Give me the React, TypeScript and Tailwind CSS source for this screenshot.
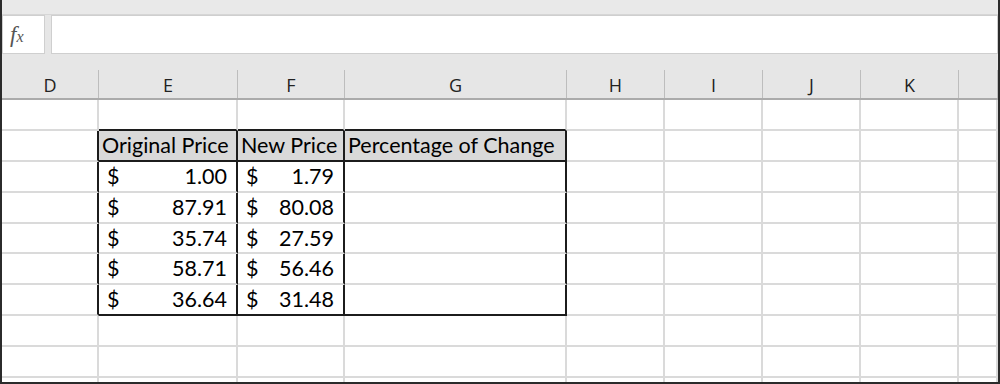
import React from 'react';

const COLS = [
  { name: 'D', w: 97 },
  { name: 'E', w: 139 },
  { name: 'F', w: 107 },
  { name: 'G', w: 222 },
  { name: 'H', w: 98 },
  { name: 'I', w: 98 },
  { name: 'J', w: 98 },
  { name: 'K', w: 98 },
  { name: '', w: 39 },
];

const ROW_H = ['h-[31px]', 'h-[31px]', 'h-[31px]', 'h-[31px]', 'h-[30px]', 'h-[31px]', 'h-[31px]', 'h-[31px]', 'h-[31px]', 'h-[31px]'];

const PRICES: [string, string][] = [
  ['1.00', '1.79'],
  ['87.91', '80.08'],
  ['35.74', '27.59'],
  ['58.71', '56.46'],
  ['36.64', '31.48'],
];

const CELL_FONT = { fontFamily: 'Lato, "Open Sans", sans-serif' };

// table sits in rows 1-6, columns E..G
function cellBorders(r: number, c: number) {
  const inTable = r >= 1 && r <= 6;
  const right = inTable && c >= 0 && c <= 3 ? 'border-r-[#1c1c1c]' : 'border-r-[#dadada]';
  const bottom = (r === 0 || r === 1 || r === 6) && c >= 1 && c <= 3 ? 'border-b-[#1c1c1c]' : 'border-b-[#dadada]';
  return `border-r-2 border-b-2 ${right} ${bottom}`;
}

function Money({ v }: { v: string }) {
  return (
    <div className="flex h-full items-center justify-between pl-[8px] pr-[9px] text-[21.5px] text-black" style={CELL_FONT}>
      <span>$</span>
      <span>{v}</span>
    </div>
  );
}

function CellContent({ r, c }: { r: number; c: number }) {
  if (r === 1 && c >= 1 && c <= 3) {
    const label = ['Original Price', 'New Price', 'Percentage of Change'][c - 1];
    return (
      <div className="flex h-full items-center whitespace-nowrap bg-[#d9d9d9] pl-[3px] text-[21.5px] text-black" style={CELL_FONT}>
        {label}
      </div>
    );
  }
  if (r >= 2 && r <= 6 && (c === 1 || c === 2)) {
    return <Money v={PRICES[r - 2][c - 1]} />;
  }
  return null;
}

export default function App() {
  return (
    <div className="flex h-[384px] w-[1000px] flex-col overflow-hidden border-b-2 border-l-2 border-r-2 border-[#2b2b2b] bg-white">
      {/* formula bar */}
      <div className="h-[70px] shrink-0 bg-[#e6e6e6]">
        <div className="h-[15px] border-b border-[#d6d6d6] bg-[#e9e9e9]" />
        <div className="flex h-[39px] gap-[6px]">
          <div className="flex w-[43px] items-center border border-[#cfcfcf] bg-white pl-[7px]">
            <span className="italic leading-none text-[#555]" style={{ fontFamily: '"Liberation Serif", serif', fontSize: 23 }}>
              f<span className="text-[16px]">x</span>
            </span>
          </div>
          <div className="flex-1 border border-[#cfcfcf] bg-white" />
        </div>
      </div>

      {/* column headers */}
      <div className="flex h-[30px] shrink-0 border-b-2 border-[#ababab] bg-[#e6e6e6]">
        {COLS.map((col, i) => (
          <div
            key={i}
            style={{ width: col.w, fontFamily: '"Open Sans", "Noto Sans", sans-serif' }}
            className="flex shrink-0 items-center justify-center border-r border-[#bdbdbd] pt-[2px] text-[18px] text-[#222]"
          >
            {col.name}
          </div>
        ))}
      </div>

      {/* sheet body */}
      <div className="flex flex-col">
        {ROW_H.map((h, r) => (
          <div key={r} className={`flex shrink-0 ${h}`}>
            {COLS.map((col, c) => (
              <div key={c} style={{ width: col.w }} className={`shrink-0 ${cellBorders(r, c)}`}>
                <CellContent r={r} c={c} />
              </div>
            ))}
          </div>
        ))}
      </div>
    </div>
  );
}
